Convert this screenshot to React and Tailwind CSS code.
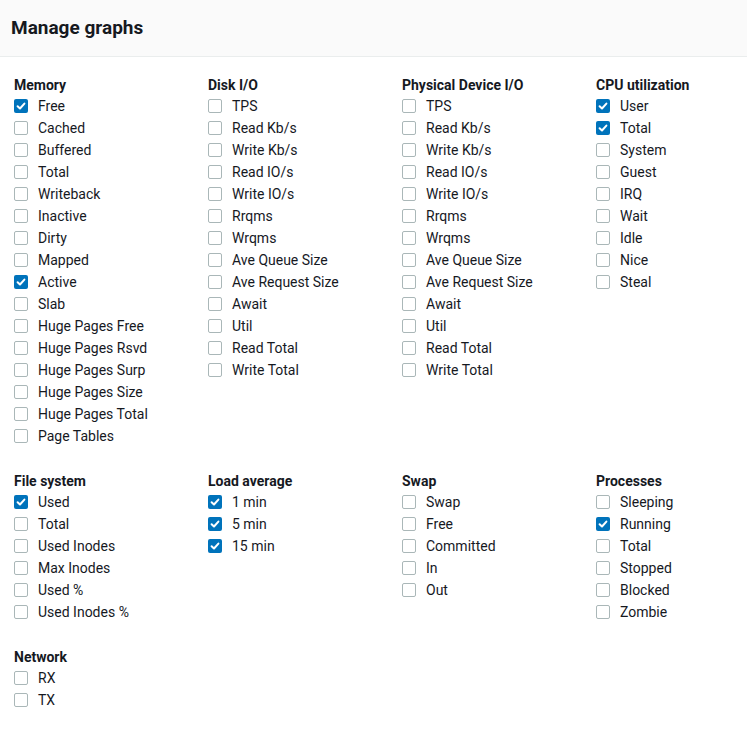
import React, { useState } from 'react';

const sections = [
    [
        { title: 'Memory', items: ['Free', 'Cached', 'Buffered', 'Total', 'Writeback', 'Inactive', 'Dirty', 'Mapped', 'Active', 'Slab', 'Huge Pages Free', 'Huge Pages Rsvd', 'Huge Pages Surp', 'Huge Pages Size', 'Huge Pages Total', 'Page Tables'], checked: ['Free', 'Active'] },
        { title: 'Disk I/O', items: ['TPS', 'Read Kb/s', 'Write Kb/s', 'Read IO/s', 'Write IO/s', 'Rrqms', 'Wrqms', 'Ave Queue Size', 'Ave Request Size', 'Await', 'Util', 'Read Total', 'Write Total'], checked: [] },
        { title: 'Physical Device I/O', items: ['TPS', 'Read Kb/s', 'Write Kb/s', 'Read IO/s', 'Write IO/s', 'Rrqms', 'Wrqms', 'Ave Queue Size', 'Ave Request Size', 'Await', 'Util', 'Read Total', 'Write Total'], checked: [] },
        { title: 'CPU utilization', items: ['User', 'Total', 'System', 'Guest', 'IRQ', 'Wait', 'Idle', 'Nice', 'Steal'], checked: ['User', 'Total'] },
    ],
    [
        { title: 'File system', items: ['Used', 'Total', 'Used Inodes', 'Max Inodes', 'Used %', 'Used Inodes %'], checked: ['Used'] },
        { title: 'Load average', items: ['1 min', '5 min', '15 min'], checked: ['1 min', '5 min', '15 min'] },
        { title: 'Swap', items: ['Swap', 'Free', 'Committed', 'In', 'Out'], checked: [] },
        { title: 'Processes', items: ['Sleeping', 'Running', 'Total', 'Stopped', 'Blocked', 'Zombie'], checked: ['Running'] },
    ],
    [
        { title: 'Network', items: ['RX', 'TX'], checked: [] },
    ],
];

const Checkbox = ({ label, initial }) => {
    const [on, setOn] = useState(initial);
    return (
        <label className="flex items-center h-[22px] cursor-pointer select-none" onClick={() => setOn(!on)}>
            {on ? (
                <span className="w-[14px] h-[14px] rounded-[2px] bg-[#0073bb] flex items-center justify-center">
                    <svg width="10" height="10" viewBox="0 0 10 10">
                        <path d="M1.6 5.2 L4 7.5 L8.4 2.6" fill="none" stroke="white" strokeWidth="2" strokeLinecap="round" strokeLinejoin="round" />
                    </svg>
                </span>
            ) : (
                <span className="w-[14px] h-[14px] rounded-[2px] border border-[#aab7b8] bg-white" />
            )}
            <span className="ml-[10px] text-[14px] text-[#16191f]">{label}</span>
        </label>
    );
};

const App = () => {
    return (
        <div className="w-[747px] h-[730px] bg-white overflow-hidden" style={{ fontFamily: 'Roboto, "Liberation Sans", sans-serif' }}>
            {/* header */}
            <div className="h-[57px] bg-[#fafafa] border-b border-[#eaeded] flex items-center px-[11px]">
                <h1 className="text-[19px] font-bold text-[#16191f]">Manage graphs</h1>
            </div>

            <div className="pt-[18px] px-[14px] flex flex-col gap-[24px]">
                {sections.map((row, i) => (
                    <div key={i} className="grid grid-cols-[repeat(4,194px)]">
                        {row.map((sec) => (
                            <div key={sec.title}>
                                <div className="h-[20px] flex items-center text-[14px] font-bold text-[#16191f]">{sec.title}</div>
                                {sec.items.map((item) => (
                                    <Checkbox key={item} label={item} initial={sec.checked.includes(item)} />
                                ))}
                            </div>
                        ))}
                    </div>
                ))}
            </div>
        </div>
    );
};

export default App;
